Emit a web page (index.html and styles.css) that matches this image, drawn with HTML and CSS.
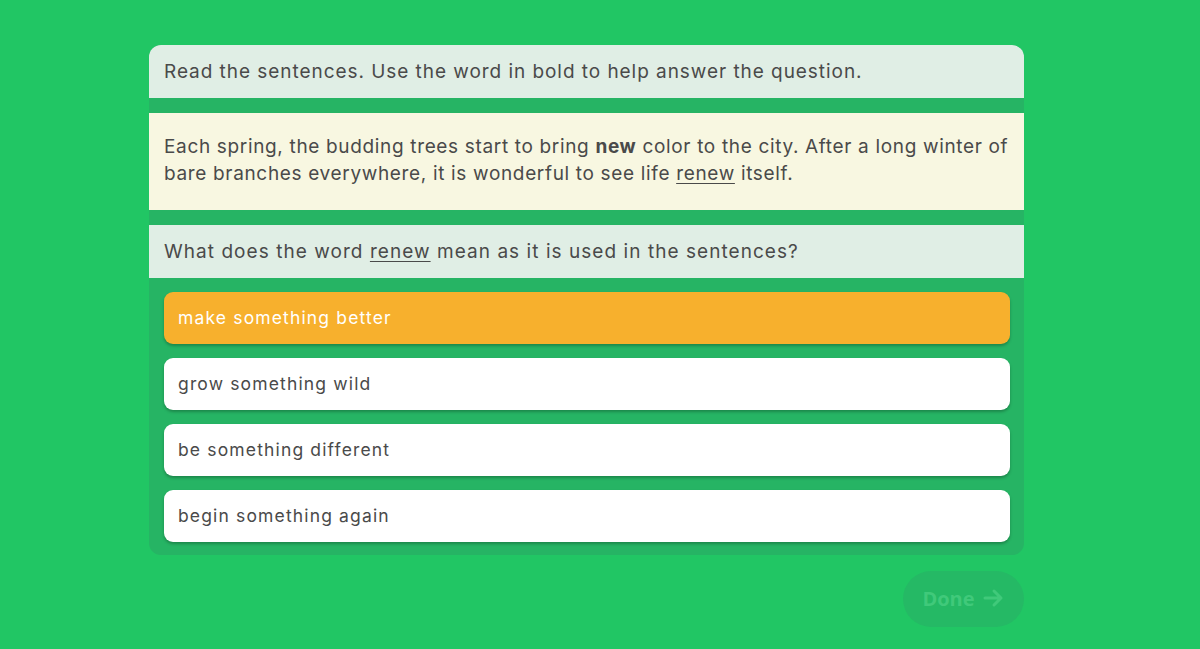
FILE: index.html
```html
<!DOCTYPE html>
<html>
<head>
<meta charset="utf-8">
<link rel="stylesheet" href="styles.css">
</head>
<body>
<div class="page">
  <div class="card">
    <div class="instr"><span>Read the sentences. Use the word in bold to help answer the question.</span></div>
    <div class="passage">Each spring, the budding trees start to bring <b>new</b> color to the city. After a long winter of bare branches everywhere, it is wonderful to see life <u>renew</u> itself.</div>
    <div class="question"><span>What does the word <u>renew</u> mean as it is used in the sentences?</span></div>
    <div class="answers">
      <div class="opt selected"><span>make something better</span></div>
      <div class="opt"><span>grow something wild</span></div>
      <div class="opt"><span>be something different</span></div>
      <div class="opt"><span>begin something again</span></div>
    </div>
  </div>
  <div class="footer">
    <button class="done">Done
      <svg width="22" height="20" viewBox="0 0 22 20"><path d="M2 10h16M11 3l7 7-7 7" fill="none" stroke="currentColor" stroke-width="3" stroke-linecap="round" stroke-linejoin="round"/></svg>
    </button>
  </div>
</div>
</body>
</html>
```

FILE: styles.css
```css
html, body { margin: 0; padding: 0; }
* { box-sizing: border-box; }
body {
  background: #21c664;
  font-family: "Inter", "DejaVu Sans", sans-serif;
  color: #4a4a4a;
  width: 1200px;
  height: 649px;
  overflow: hidden;
}
.page {
  width: 875px;
  margin-left: 149px;
  padding-top: 45px;
}
.card {
  background: #26b464;
  border-radius: 12px;
  overflow: hidden;
  display: flex;
  flex-direction: column;
  gap: 15px;
}
.instr, .question {
  background: #e0eee5;
  height: 53px;
  display: flex;
  align-items: center;
  padding: 0 15px;
  font-size: 19px;
}
.instr { letter-spacing: 0.95px; }
.question { letter-spacing: 1.05px; }
.passage {
  background: #f8f7e1;
  padding: 20px 14px 23px 15px;
  font-size: 19px;
  line-height: 27px;
  letter-spacing: 0.66px;
}
.passage b { font-weight: 700; }
u { text-underline-offset: 3px; }
.answers {
  margin-top: -15px;
  padding: 14px 14px 13px 15px;
  display: flex;
  flex-direction: column;
  gap: 14px;
}
.opt {
  background: #fff;
  height: 52px;
  border-radius: 9px;
  display: flex;
  align-items: center;
  padding: 0 14px 1px;
  font-size: 17.5px;
  letter-spacing: 1.15px;
  box-shadow: 0 2px 3px rgba(0,0,0,0.25);
}
.opt.selected {
  background: #f7b02d;
  color: #fff;
}
.footer {
  display: flex;
  justify-content: flex-end;
  padding-top: 16px;
}
.done {
  width: 121px;
  height: 56px;
  border-radius: 28px;
  border: none;
  background: #25b965;
  color: #40c97a;
  font-family: "Open Sans", sans-serif;
  font-weight: 700;
  font-size: 20px;
  display: flex;
  align-items: center;
  justify-content: center;
  gap: 8px;
  padding: 0 0 2px;
}
```
